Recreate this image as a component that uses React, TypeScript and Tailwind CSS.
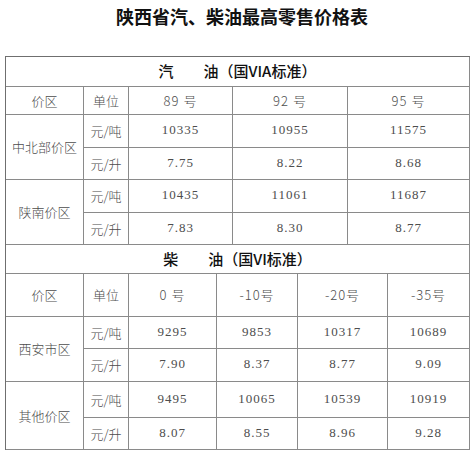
import React from 'react';

// font stacks as Tailwind arbitrary classes
const serif = "font-['Liberation_Serif','Noto_Sans_CJK_SC',serif]";
const sans = "font-['Noto_Sans_CJK_SC',sans-serif]";

const gasCols = 'grid-cols-[78px_45px_104px_115px_122px]';
const dieselCols = 'grid-cols-[78px_45px_88px_81px_90px_82px]';

const cell = 'flex items-center justify-center border-r border-b border-[#8a8a8a] text-[#4d4d4d]';
const label = `${cell} ${sans} text-[13px] font-light`;

type Region = { name: string; ton: string[]; litre: string[]; h: [string, string] };

const gasoline: Region[] = [
  { name: '中北部价区', ton: ['10335', '10955', '11575'], litre: ['7.75', '8.22', '8.68'], h: ['h-[33px]', 'h-[32px]'] },
  { name: '陕南价区', ton: ['10435', '11061', '11687'], litre: ['7.83', '8.30', '8.77'], h: ['h-[33px]', 'h-[32px]'] },
];

const diesel: Region[] = [
  { name: '西安市区', ton: ['9295', '9853', '10317', '10689'], litre: ['7.90', '8.37', '8.77', '9.09'], h: ['h-[32px]', 'h-[33px]'] },
  { name: '其他价区', ton: ['9495', '10065', '10539', '10919'], litre: ['8.07', '8.55', '8.96', '9.28'], h: ['h-[36px]', 'h-[32px]'] },
];

const Num = ({ v, h }: { v: string; h: string }) => (
  <div className={`${cell} ${h} ${serif} text-[13px] tracking-[1px] pb-[2px]`}>{v}</div>
);

const RegionRows = ({ r }: { r: Region }) => (
  <>
    <div className={`${label} row-span-2`}>{r.name}</div>
    <div className={`${label} ${r.h[0]}`}>元/吨</div>
    {r.ton.map((v, i) => (
      <Num key={'t' + i} v={v} h={r.h[0]} />
    ))}
    <div className={`${label} ${r.h[1]}`}>元/升</div>
    {r.litre.map((v, i) => (
      <Num key={'l' + i} v={v} h={r.h[1]} />
    ))}
  </>
);

const SectionTitle = ({ name, std, h }: { name: string; std: string; h: string }) => (
  <div
    className={`${h} ${sans} flex items-center justify-center border-r border-b border-[#8a8a8a] text-[15px] font-medium text-[#111]`}
  >
    <span>{name[0]}</span>
    <span className="w-[30px]" />
    <span>{name[1]}（国{std}标准）</span>
  </div>
);

const HeadRow = ({ grades, h }: { grades: string[]; h: string }) => (
  <>
    <div className={`${label} ${h}`}>价区</div>
    <div className={`${label} ${h}`}>单位</div>
    {grades.map((g) => (
      <div key={g} className={`${label} ${h} ${serif} tracking-[1px]`}>
        {g}
      </div>
    ))}
  </>
);

export default function App() {
  return (
    <div className="w-[474px] h-[452px] bg-white">
      <div className={`h-[32px] pl-[10px] flex items-center justify-center ${sans} text-[18px] font-bold text-[#111]`}>
        陕西省汽、柴油最高零售价格表
      </div>
      <div className="mt-[24px] ml-[5px] w-[465px] border-l border-t border-[#6f6f6f]">
        <SectionTitle name="汽油" std="VIA" h="h-[30px]" />
        <div className={`grid ${gasCols}`}>
          <HeadRow grades={['89 号', '92 号', '95 号']} h="h-[28px]" />
          {gasoline.map((r) => (
            <RegionRows key={r.name} r={r} />
          ))}
        </div>
        <SectionTitle name="柴油" std="VI" h="h-[29px]" />
        <div className={`grid ${dieselCols}`}>
          <HeadRow grades={['0 号', '-10号', '-20号', '-35号']} h="h-[43px]" />
          {diesel.map((r) => (
            <RegionRows key={r.name} r={r} />
          ))}
        </div>
      </div>
    </div>
  );
}
